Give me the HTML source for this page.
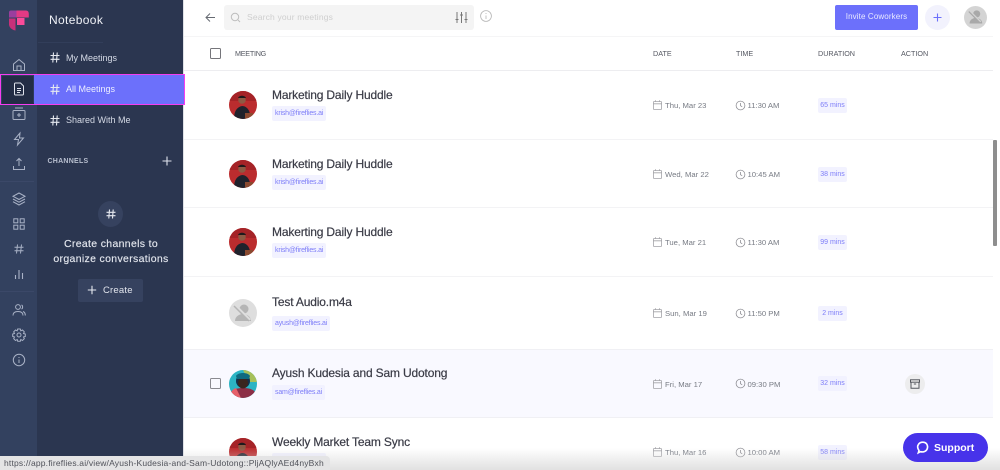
<!DOCTYPE html>
<html><head><meta charset="utf-8"><title>Notebook</title>
<style>
*{box-sizing:border-box}
html,body{margin:0;padding:0;width:1000px;height:470px;overflow:hidden;background:#fff;font-family:"Liberation Sans",sans-serif}
.a{position:absolute}
.t{position:absolute;white-space:nowrap;line-height:1}
svg{position:absolute;overflow:visible}
.side{color:#d5dae6;font-size:9px}
.title{font-size:12px;color:#3a3b46;letter-spacing:-.16px;-webkit-text-stroke:.2px #3a3b46;margin-top:-1px}
.mail{position:absolute;left:272px;height:15px;background:#f2f2ff;border-radius:2px;color:#7d7df8;font-size:7px;line-height:15px;padding:0 3px;letter-spacing:-.18px}
.cell{font-size:7.7px;color:#777b84;margin-top:1px}
.dur{position:absolute;left:818px;width:29px;height:15px;background:#f2f2ff;border-radius:2px;color:#7d7df8;font-size:7px;line-height:15px;text-align:center}
.hd{font-size:7.2px;color:#555862;margin-top:.5px}
.line{position:absolute;left:184px;width:809px;height:1px;background:#ededf0}
.ct{font-size:10.5px;color:#e4e7ee;letter-spacing:.33px;-webkit-text-stroke:.15px #e4e7ee}
</style></head><body>
<!-- main rows -->
<div class="a" style="left:184px;top:349px;width:809px;height:68px;background:#f9f9ff"></div>
<div class="a" style="left:184px;top:36px;width:809px;height:1px;background:#f5f5f6"></div>
<div class="line" style="top:70px"></div>
<div class="line" style="top:139px;background:#f3f3f5"></div>
<div class="line" style="top:207px;background:#f3f3f5"></div>
<div class="line" style="top:276px;background:#f3f3f5"></div>
<div class="line" style="top:349px;background:#f0f0f4"></div>
<div class="line" style="top:417px;background:#f0f0f4"></div>

<!-- header -->
<svg style="left:205px;top:12px" width="11" height="11" viewBox="0 0 11 11" fill="none" stroke="#666a72" stroke-width="1"><path d="M10 5.500H1M5 1.500L1 5.500L5 9.500"/></svg>
<div class="a" style="left:224px;top:5px;width:250px;height:25px;background:#f4f4f4;border-radius:3px"></div>
<svg style="left:230px;top:12px" width="11" height="11" viewBox="0 0 11 11" fill="none" stroke="#bdbdbd" stroke-width="1"><circle cx="5" cy="5" r="3.700"/><path d="M8 8L10 10"/></svg>
<div class="t" style="left:247px;top:13px;font-size:8.500px;color:#cfcfcf;letter-spacing:.17px">Search your meetings</div>
<svg style="left:455px;top:11px" width="13" height="13" viewBox="0 0 13 13" fill="none" stroke="#777" stroke-width="1"><path d="M2 1V12M6.500 1V12M11 1V12M.5 8.500H3.500M5 4H8M9.500 8.500H12.500"/></svg>
<svg style="left:480px;top:10px" width="12" height="12" viewBox="0 0 12 12" fill="none" stroke="#b5b5b5" stroke-width=".8"><circle cx="6" cy="6" r="5.400"/><path d="M6 5.500V9M6 3V4"/></svg>
<div class="a" style="left:835px;top:5px;width:83px;height:25px;background:#6c70fb;border-radius:2px"></div>
<div class="t" style="left:835px;width:83px;text-align:center;top:13px;font-size:8px;color:#e9e9ff;letter-spacing:.12px">Invite Coworkers</div>
<div class="a" style="left:925px;top:5px;width:25px;height:25px;background:#f2f2fd;border-radius:50%"></div>
<svg style="left:932px;top:12px" width="11" height="11" viewBox="0 0 11 11" fill="none" stroke="#6c70fb" stroke-width="1.100"><path d="M5.500 1.500V9.500M1.500 5.500H9.500"/></svg>
<div class="a" style="left:964px;top:6px;width:23px;height:23px;background:#d4d4d4;border-radius:50%"></div>
<svg style="left:964px;top:6px" width="23" height="23" viewBox="0 0 29 29"><circle cx="16" cy="10" r="4.500" fill="#a9a9a9"/><path d="M7 22c0-5 5-7 8-7s8 2 8 7z" fill="#a9a9a9"/><path d="M7 6L21 20" stroke="#d4d4d4" stroke-width="2"/><path d="M6 7L20 21" stroke="#a9a9a9" stroke-width="1.500"/></svg>

<!-- table head -->
<div class="a" style="left:210px;top:48px;width:11px;height:11px;border:1.300px solid #75757a;border-radius:1.500px"></div>
<div class="t hd" style="left:235px;top:49px;letter-spacing:-.25px">MEETING</div>
<div class="t hd" style="left:653px;top:49px">DATE</div>
<div class="t hd" style="left:736px;top:49px">TIME</div>
<div class="t hd" style="left:818px;top:49px">DURATION</div>
<div class="t hd" style="left:901px;top:49px">ACTION</div>

<!-- avatars (defs) -->
<svg width="0" height="0" style="left:0;top:0"><defs>
<clipPath id="c"><circle cx="14" cy="14" r="14"/></clipPath>
<g id="kr"><g clip-path="url(#c)"><rect width="28" height="28" fill="#bb2c2e"/><rect y="0" width="28" height="10" fill="#a52327"/><path d="M5 28c0-8 3-12 8-13 4 0 7 3 8 8l-1 5z" fill="#20222c"/><circle cx="13" cy="9" r="3.800" fill="#8d5a44"/><path d="M9 7c1-3 7-3 8 0z" fill="#1e1a1c"/><rect x="16" y="22" width="8" height="6" fill="#8a4a30"/></g></g>
<g id="av"><circle cx="14" cy="14" r="14" fill="#dedede"/><circle cx="15" cy="10" r="4.500" fill="#b5b5b5"/><path d="M6 22c0-5 5-7 8-7s8 2 8 7z" fill="#b5b5b5"/><path d="M6 6L21 21" stroke="#dedede" stroke-width="2.500"/><path d="M5 7L20 22" stroke="#b5b5b5" stroke-width="1.500"/></g>
<g id="sa"><g clip-path="url(#c)"><rect width="28" height="28" fill="#2cb4c4"/><path d="M14 0H28V12H20z" fill="#a7c05a"/><path d="M0 28c0-7 5-10 14-10s14 3 14 10z" fill="#8c2f46"/><path d="M0 28c1-6 4-9 7-10l5 10z" fill="#e6606a"/><circle cx="14" cy="11" r="7" fill="#132f4a"/><ellipse cx="14" cy="13" rx="5" ry="5.500" fill="#3a261f"/><path d="M7 6C9 2 19 2 21 6L20 9H8z" fill="#0f6a80"/></g></g>
<g id="cal"><g fill="none" stroke="#a3a3a8" stroke-width=".8"><rect x=".4" y="1.500" width="8.200" height="8" rx=".8"/><path d="M.4 3.800H8.600M2.500 .3V2M6.500 .3V2"/></g></g>
<g id="clk"><g fill="none" stroke="#8f8f95" stroke-width=".8"><circle cx="4.500" cy="4.500" r="4.400"/><path d="M4.500 2V4.700L6.200 5.800"/></g></g>
</defs></svg>

<!-- row 1 -->
<svg style="left:229px;top:91px" width="28" height="28"><use href="#kr"/></svg>
<div class="t title" style="left:272px;top:90px">Marketing Daily Huddle</div>
<div class="mail" style="top:106px">krish@fireflies.ai</div>
<svg style="left:653px;top:100px" width="9" height="10"><use href="#cal"/></svg>
<div class="t cell" style="left:665px;top:101px">Thu, Mar 23</div>
<svg style="left:736px;top:100.500px" width="9" height="9"><use href="#clk"/></svg>
<div class="t cell" style="left:747.500px;top:101px">11:30 AM</div>
<div class="dur" style="top:98px">65 mins</div>

<!-- row 2 -->
<svg style="left:229px;top:160px" width="28" height="28"><use href="#kr"/></svg>
<div class="t title" style="left:272px;top:158.500px">Marketing Daily Huddle</div>
<div class="mail" style="top:175px">krish@fireflies.ai</div>
<svg style="left:653px;top:169px" width="9" height="10"><use href="#cal"/></svg>
<div class="t cell" style="left:665px;top:170px">Wed, Mar 22</div>
<svg style="left:736px;top:169.500px" width="9" height="9"><use href="#clk"/></svg>
<div class="t cell" style="left:747.500px;top:170px">10:45 AM</div>
<div class="dur" style="top:167px">38 mins</div>

<!-- row 3 -->
<svg style="left:229px;top:228px" width="28" height="28"><use href="#kr"/></svg>
<div class="t title" style="left:272px;top:227px">Makerting Daily Huddle</div>
<div class="mail" style="top:243px">krish@fireflies.ai</div>
<svg style="left:653px;top:237px" width="9" height="10"><use href="#cal"/></svg>
<div class="t cell" style="left:665px;top:238px">Tue, Mar 21</div>
<svg style="left:736px;top:237.500px" width="9" height="9"><use href="#clk"/></svg>
<div class="t cell" style="left:747.500px;top:238px">11:30 AM</div>
<div class="dur" style="top:235px">99 mins</div>

<!-- row 4 -->
<svg style="left:229px;top:299px" width="28" height="28"><use href="#av"/></svg>
<div class="t title" style="left:272px;top:297px">Test Audio.m4a</div>
<div class="mail" style="top:316px">ayush@fireflies.ai</div>
<svg style="left:653px;top:308px" width="9" height="10"><use href="#cal"/></svg>
<div class="t cell" style="left:665px;top:309px">Sun, Mar 19</div>
<svg style="left:736px;top:308.500px" width="9" height="9"><use href="#clk"/></svg>
<div class="t cell" style="left:747.500px;top:309px">11:50 PM</div>
<div class="dur" style="top:306px">2 mins</div>

<!-- row 5 -->
<div class="a" style="left:210px;top:378px;width:11px;height:11px;border:1.300px solid #8a8a90;border-radius:1.500px"></div>
<svg style="left:229px;top:370px" width="28" height="28"><use href="#sa"/></svg>
<div class="t title" style="left:272px;top:368px">Ayush Kudesia and Sam Udotong</div>
<div class="mail" style="top:385px">sam@fireflies.ai</div>
<svg style="left:653px;top:378.500px" width="9" height="10"><use href="#cal"/></svg>
<div class="t cell" style="left:665px;top:379.500px">Fri, Mar 17</div>
<svg style="left:736px;top:379px" width="9" height="9"><use href="#clk"/></svg>
<div class="t cell" style="left:747.500px;top:379.500px">09:30 PM</div>
<div class="dur" style="top:376px">32 mins</div>
<div class="a" style="left:905px;top:374px;width:20px;height:20px;border-radius:50%;background:#ededee"></div>
<svg style="left:910px;top:379px" width="10" height="10" viewBox="0 0 10 10" fill="none" stroke="#55575e" stroke-width="1"><rect x=".5" y=".8" width="9" height="2.400"/><path d="M1 3.200V9.300H9V3.200M3.800 5H6.200"/></svg>

<!-- row 6 -->
<svg style="left:229px;top:438px" width="28" height="28"><use href="#kr"/></svg>
<div class="t title" style="left:272px;top:436.500px">Weekly Market Team Sync</div>
<div class="mail" style="top:453px">krish@fireflies.ai</div>
<svg style="left:653px;top:447px" width="9" height="10"><use href="#cal"/></svg>
<div class="t cell" style="left:665px;top:448px">Thu, Mar 16</div>
<svg style="left:736px;top:447.500px" width="9" height="9"><use href="#clk"/></svg>
<div class="t cell" style="left:747.500px;top:448px">10:00 AM</div>
<div class="dur" style="top:445px">58 mins</div>

<!-- bottom fade -->
<div class="a" style="left:184px;top:448px;width:816px;height:22px;background:linear-gradient(to bottom,rgba(225,225,225,0),rgba(215,215,215,.75))"></div>

<!-- scrollbar -->
<div class="a" style="left:993px;top:140px;width:4px;height:106px;background:#8e8e8e;border-radius:1px"></div>

<!-- rail -->
<div class="a" style="left:0;top:0;width:37px;height:470px;background:#33415f"></div>
<div class="a" style="left:37px;top:0;width:146px;height:470px;background:#2b3650"></div>
<div class="a" style="left:183px;top:0;width:1px;height:470px;background:#dfe1e6"></div>
<div class="a" style="left:38px;top:42px;width:65px;height:1px;background:#323e5a"></div>
<div class="a" style="left:0;top:181px;width:34px;height:1px;background:#3b4868"></div>
<div class="a" style="left:0;top:291px;width:34px;height:1px;background:#3b4868"></div>

<!-- logo -->
<svg style="left:9px;top:10px" width="20" height="21" viewBox="0 0 20 21"><path d="M0 2.500Q0 .5 2 .5H7.500V7.500H0z" fill="#9a3e9e"/><path d="M7.500 .5H17Q19.800 .5 19.800 4V7.500H7.500z" fill="#e33a84"/><path d="M0 8.500H6.500V20.500Q1 19.500 0 15z" fill="#c8307a"/><rect x="8" y="8" width="7.500" height="7" fill="#fa4b9a"/></svg>

<!-- rail icons -->
<svg style="left:12px;top:58px" width="14" height="14" viewBox="0 0 14 14" fill="none" stroke="#a9b2c6" stroke-width="1"><path d="M1.500 6L7 1.500L12.500 6V12.500H1.500zM5 12.500V8H9V12.500"/></svg>
<div class="a" style="left:2px;top:76px;width:36px;height:28px;background:#232d45"></div>
<div class="a" style="left:33px;top:76px;width:5px;height:27px;background:#2d3a5c;border-right:0"></div>
<svg style="left:13px;top:82px" width="12" height="14" viewBox="0 0 12 14" fill="none" stroke="#dfe3ec" stroke-width="1"><path d="M1.500 2Q1.500 1 2.500 1H7.500L10.500 4V12Q10.500 13 9.500 13H2.500Q1.500 13 1.500 12zM4 6.500H8M4 8.500H8M4 10.500H7"/></svg>
<svg style="left:12px;top:107px" width="14" height="13" viewBox="0 0 14 13" fill="none" stroke="#a9b2c6" stroke-width="1"><rect x="1" y="3.500" width="12" height="9" rx="1"/><path d="M3 1H11M7 6V10M5 8H9"/></svg>
<svg style="left:13px;top:132px" width="12" height="14" viewBox="0 0 12 14" fill="none" stroke="#a9b2c6" stroke-width="1"><path d="M7 1L1.500 7.500H5.500L4.500 13L10.500 6H6.500z"/></svg>
<svg style="left:12px;top:157px" width="14" height="14" viewBox="0 0 14 14" fill="none" stroke="#a9b2c6" stroke-width="1"><path d="M7 9V2M4.500 4L7 1.500L9.500 4M1.500 9V12.500H12.500V9"/></svg>
<svg style="left:12px;top:192px" width="14" height="14" viewBox="0 0 14 14" fill="none" stroke="#a9b2c6" stroke-width="1"><path d="M7 1L13 4.300L7 7.500L1 4.300zM1 7L7 10.200L13 7M1 9.700L7 13L13 9.700"/></svg>
<svg style="left:13px;top:218px" width="12" height="12" viewBox="0 0 12 12" fill="none" stroke="#a9b2c6" stroke-width="1"><rect x=".8" y=".8" width="4" height="4"/><rect x="7.200" y=".8" width="4" height="4"/><rect x=".8" y="7.200" width="4" height="4"/><rect x="7.200" y="7.200" width="4" height="4"/></svg>
<svg style="left:14px;top:244px" width="10" height="10" viewBox="0 0 10 10" fill="none" stroke="#a9b2c6" stroke-width="1"><path d="M3.500 .5L2.500 9.500M7.500 .5L6.500 9.500M.5 3.300H9.500M.5 6.700H9.500"/></svg>
<svg style="left:14px;top:269px" width="10" height="10" viewBox="0 0 10 10" fill="none" stroke="#a9b2c6" stroke-width="1.100"><path d="M1.500 6V10M5 1V10M8.500 4V10"/></svg>
<svg style="left:12px;top:304px" width="14" height="12" viewBox="0 0 14 12" fill="none" stroke="#a9b2c6" stroke-width="1"><circle cx="6" cy="3" r="2.400"/><path d="M1 11.500C1 8.500 3.500 7.500 6 7.500S11 8.500 11 11.500M9.500 1C11 1.500 11 4.500 9.500 5M11 7.500C12.500 8 13.300 9.300 13.300 11.500"/></svg>
<svg style="left:12px;top:328px" width="14" height="14" viewBox="0 0 14 14" fill="none" stroke="#a9b2c6" stroke-width="1"><circle cx="7" cy="7" r="2"/><path d="M5.700 1H8.300L8.800 2.800L10.500 2L12.300 3.800L11.500 5.500L13.300 6V8.500L11.500 9L12.300 10.700L10.500 12.500L8.800 11.500L8.300 13.300H5.700L5.200 11.500L3.500 12.500L1.700 10.700L2.500 9L.7 8.500V6L2.500 5.500L1.700 3.800L3.500 2L5.200 2.800z"/></svg>
<svg style="left:12px;top:353px" width="14" height="14" viewBox="0 0 14 14" fill="none" stroke="#a9b2c6" stroke-width="1"><circle cx="7" cy="7" r="5.700"/><path d="M7 6.500V10M7 4V5"/></svg>

<!-- sidebar -->
<div class="t" style="left:49px;top:13.500px;font-size:12px;color:#f0f2f7;letter-spacing:.35px">Notebook</div>

<!-- active item -->
<div class="a" style="left:34px;top:75px;width:150px;height:29px;background:#6c70fb"></div>
<div class="a" style="left:0;top:73.500px;width:185px;height:31.500px;border:1.600px solid #f53df0"></div>

<svg style="left:50px;top:52px" width="10" height="11" viewBox="0 0 10 11" fill="none" stroke="#e6e9f0" stroke-width="1.100"><path d="M3.500 .5L2.800 10.500M7.200 .5L6.500 10.500M.5 3.500H9.500M.5 7.300H9.500"/></svg>
<div class="t side" style="left:66px;top:53.500px">My Meetings</div>
<svg style="left:50px;top:83.500px" width="10" height="11" viewBox="0 0 10 11" fill="none" stroke="#e6e9f0" stroke-width="1.100"><path d="M3.500 .5L2.800 10.500M7.200 .5L6.500 10.500M.5 3.500H9.500M.5 7.300H9.500"/></svg>
<div class="t side" style="left:66px;top:84.500px;color:#eceeff">All Meetings</div>
<svg style="left:50px;top:115px" width="10" height="11" viewBox="0 0 10 11" fill="none" stroke="#e6e9f0" stroke-width="1.100"><path d="M3.500 .5L2.800 10.500M7.200 .5L6.500 10.500M.5 3.500H9.500M.5 7.300H9.500"/></svg>
<div class="t side" style="left:66px;top:115.500px">Shared With Me</div>

<div class="t" style="left:47.500px;top:157.500px;font-size:7px;font-weight:bold;color:#b8bfcf;letter-spacing:.25px">CHANNELS</div>
<svg style="left:162px;top:156px" width="10" height="10" viewBox="0 0 10 10" fill="none" stroke="#dfe3ec" stroke-width="1.100"><path d="M5 .5V9.500M.5 5H9.500"/></svg>

<div class="a" style="left:98px;top:201px;width:25px;height:26px;border-radius:50%;background:#36425f"></div>
<svg style="left:106px;top:209px" width="10" height="10" viewBox="0 0 10 10" fill="none" stroke="#e6e9f0" stroke-width="1.100"><path d="M3.500 .5L2.800 9.500M7.200 .5L6.500 9.500M.5 3.300H9.500M.5 6.700H9.500"/></svg>
<div class="t ct" style="left:37px;width:148px;text-align:center;top:239px">Create channels to</div>
<div class="t ct" style="left:37px;width:148px;text-align:center;top:254px">organize conversations</div>
<div class="a" style="left:78px;top:279px;width:65px;height:23px;background:#36425f;border-radius:2px"></div>
<svg style="left:87px;top:285px" width="10" height="10" viewBox="0 0 10 10" fill="none" stroke="#e6e9f0" stroke-width="1.100"><path d="M5 .8V9.200M.8 5H9.200"/></svg>
<div class="t" style="left:103px;top:285.500px;font-size:9.500px;color:#e2e5ed;letter-spacing:.2px">Create</div>

<!-- support -->
<div class="a" style="left:903px;top:433px;width:85px;height:29px;background:#4733ea;border-radius:15px"></div>
<svg style="left:916px;top:441px" width="13" height="13" viewBox="0 0 13 13" fill="none" stroke="#fff" stroke-width="1.600"><path d="M2.300 11.800L3 9.500C1.500 7.500 1.200 5 2.700 3C4.700 .6 8.800 .6 10.700 3C12.300 5.500 11.700 8.800 9 10.300C7.300 11.200 5.500 11 4.500 10.700z"/></svg>
<div class="t" style="left:934px;top:443px;font-size:10.500px;font-weight:bold;color:#fff;letter-spacing:0">Support</div>

<!-- status tooltip -->
<div class="a" style="left:0;top:456px;width:330px;height:14px;background:#e4e4e5;border-radius:0 4px 0 0"></div>
<div class="t" style="left:4px;top:459px;font-size:8.500px;color:#50525a;letter-spacing:.18px">https://app.fireflies.ai/view/Ayush-Kudesia-and-Sam-Udotong::PljAQlyAEd4nyBxh</div>
</body></html>
